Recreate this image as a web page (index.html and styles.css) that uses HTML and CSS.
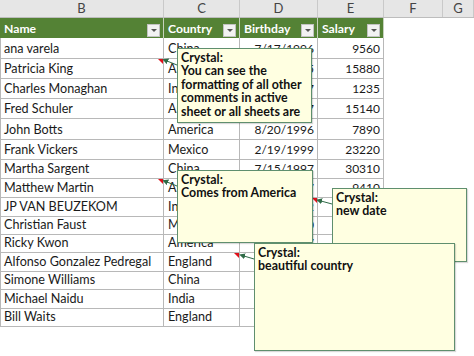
FILE: index.html
```html
<!DOCTYPE html>
<html>
  <head>
    <meta charset="utf-8">
    <title>Comments - Sheet1</title>
    <link rel="stylesheet" href="styles.css">
  </head>
  <body>
    <div class="sheet">
      <div class="col-heads">
        <div class="ch">B</div>
        <div class="ch">C</div>
        <div class="ch">D</div>
        <div class="ch">E</div>
        <div class="ch">F</div>
        <div class="ch">G</div>
      </div>

      <div class="grid">
        <div class="hd">Name<span class="filter"></span></div>
        <div class="hd">Country<span class="filter"></span></div>
        <div class="hd">Birthday<span class="filter"></span></div>
        <div class="hd">Salary<span class="filter"></span></div>

        <div class="c">ana varela</div><div class="c">China</div><div class="c num">7/17/1996</div><div class="c num">9560</div>
        <div class="c note-mark">Patricia King</div><div class="c">America</div><div class="c num">3/8/1995</div><div class="c num">15880</div>
        <div class="c">Charles Monaghan</div><div class="c">India</div><div class="c num">5/22/1997</div><div class="c num">1235</div>
        <div class="c">Fred Schuler</div><div class="c">America</div><div class="c num">11/3/1997</div><div class="c num">15140</div>
        <div class="c">John Botts</div><div class="c">America</div><div class="c num">8/20/1996</div><div class="c num">7890</div>
        <div class="c">Frank Vickers</div><div class="c">Mexico</div><div class="c num">2/19/1999</div><div class="c num">23220</div>
        <div class="c">Martha Sargent</div><div class="c">China</div><div class="c num">7/15/1997</div><div class="c num">30310</div>
        <div class="c note-mark">Matthew Martin</div><div class="c">America</div><div class="c num">4/12/1997</div><div class="c num">9410</div>
        <div class="c">JP VAN BEUZEKOM</div><div class="c">India</div><div class="c num note-mark">6/30/1992</div><div class="c num">12340</div>
        <div class="c">Christian Faust</div><div class="c">Mexico</div><div class="c num">9/18/1990</div><div class="c num">18650</div>
        <div class="c">Ricky Kwon</div><div class="c">America</div><div class="c num">5/27/1997</div><div class="c num">21070</div>
        <div class="c">Alfonso Gonzalez Pedregal</div><div class="c note-mark">England</div><div class="c num">1/9/1994</div><div class="c num">16220</div>
        <div class="c">Simone Williams</div><div class="c">China</div><div class="c num">10/4/1998</div><div class="c num">8830</div>
        <div class="c">Michael Naidu</div><div class="c">India</div><div class="c num">12/1/1995</div><div class="c num">27410</div>
        <div class="c">Bill Waits</div><div class="c">England</div><div class="c num">3/26/1993</div><div class="c num">11560</div>
      </div>

      <!-- comment arrows sit over the cells -->
      <svg class="arrows" width="474" height="356" viewBox="0 0 474 356">
        <defs>
          <marker id="head" markerWidth="6" markerHeight="6" refX="1" refY="3" orient="auto-start-reverse">
            <path d="M0 0 L6 3 L0 6 Z" fill="#2f6b47"/>
          </marker>
        </defs>
        <line x1="177" y1="65" x2="167" y2="61" marker-end="url(#head)"/>
        <line x1="177" y1="186" x2="167" y2="182" marker-end="url(#head)"/>
        <line x1="332" y1="204" x2="321" y2="201" marker-end="url(#head)"/>
        <line x1="254" y1="259" x2="244" y2="256" marker-end="url(#head)"/>
      </svg>

      <div class="note note-1">Crystal:<br>You can see the<br>formatting of all other<br>comments in active<br>sheet or all sheets are</div>
      <div class="note note-2">Crystal:<br>Comes from America</div>
      <div class="note note-3">Crystal:<br>new date</div>
      <div class="note note-4">Crystal:<br>beautiful country</div>
    </div>
  </body>
</html>
```

FILE: styles.css
```css
body {
  margin: 0;
  background-color: #ffffff;
}

.sheet {
  position: relative;
  width: 474px;
  height: 356px;
  overflow: hidden;
  font-family: 'Lato', sans-serif;
  color: #1a1a1a;
}

.col-heads {
  display: grid;
  grid-template-columns: 164px 76px 78px 66px 59px 1fr;
  height: 18px;
  background-color: #e6e6e6;
  border-bottom: 1px solid #bdbdbd;
  box-sizing: border-box;
}

.ch {
  border-right: 1px solid #c9c9c9;
  text-align: center;
  font-size: 13px;
  line-height: 17px;
  color: #444;
}

.grid {
  display: grid;
  grid-template-columns: 164px 76px 78px 66px;
  grid-template-rows: 20px 21px 20px 20px 20px 21px 20px 19px 19px 19px 18px 18px 19px 18px 19px 18px;
  width: 384px;
}

.hd {
  position: relative;
  background-color: #548235;
  color: #ffffff;
  font-weight: bold;
  font-size: 12.2px;
  padding-left: 4px;
  display: flex;
  align-items: flex-end;
  padding-bottom: 2px;
  border-right: 1px solid #c6d2bd;
  box-sizing: border-box;
}

.filter {
  position: absolute;
  right: 3px;
  bottom: 1px;
  width: 13px;
  height: 13px;
  background-color: #f2f2f2;
  border: 1px solid #c2c2c2;
  box-sizing: border-box;
}

.filter:after {
  content: '';
  position: absolute;
  left: 3px;
  top: 4px;
  border-left: 3px solid transparent;
  border-right: 3px solid transparent;
  border-top: 3px solid #555;
}

.c {
  position: relative;
  font-size: 12.6px;
  padding-left: 4px;
  display: flex;
  align-items: flex-end;
  padding-bottom: 2px;
  border-right: 1px solid #b8b8b8;
  border-bottom: 1px solid #b8b8b8;
  box-sizing: border-box;
  white-space: nowrap;
  overflow: hidden;
}

.c:nth-child(4n+1) {
  border-left: 1px solid #b8b8b8;
  padding-left: 3px;
}

.num {
  font-size: 12px;
  justify-content: flex-end;
  padding-left: 0;
  padding-right: 3px;
}

/* red comment indicator in the top right corner */
.note-mark:after {
  content: '';
  position: absolute;
  top: 0;
  right: 0;
  border-left: 5px solid transparent;
  border-top: 5px solid #e0101a;
}

.arrows {
  position: absolute;
  left: 0;
  top: 0;
}

.arrows line {
  stroke: #2f6b47;
  stroke-width: 1;
}

.note {
  position: absolute;
  background-color: #ffffe1;
  border: 1px solid #5f8f6e;
  box-sizing: border-box;
  font-weight: bold;
  font-size: 12.4px;
  line-height: 13.4px;
  padding: 2px 3px;
  color: #111;
  white-space: nowrap;
  overflow: hidden;
  box-shadow: 1px 1px 1px rgba(0, 0, 0, 0.15);
}

.note-1 {
  left: 177px;
  top: 48px;
  width: 135px;
  height: 75px;
}

.note-2 {
  left: 177px;
  top: 170px;
  width: 136px;
  height: 73px;
}

.note-3 {
  left: 332px;
  top: 188px;
  width: 135px;
  height: 74px;
}

.note-4 {
  left: 254px;
  top: 243px;
  width: 201px;
  height: 108px;
}
```
